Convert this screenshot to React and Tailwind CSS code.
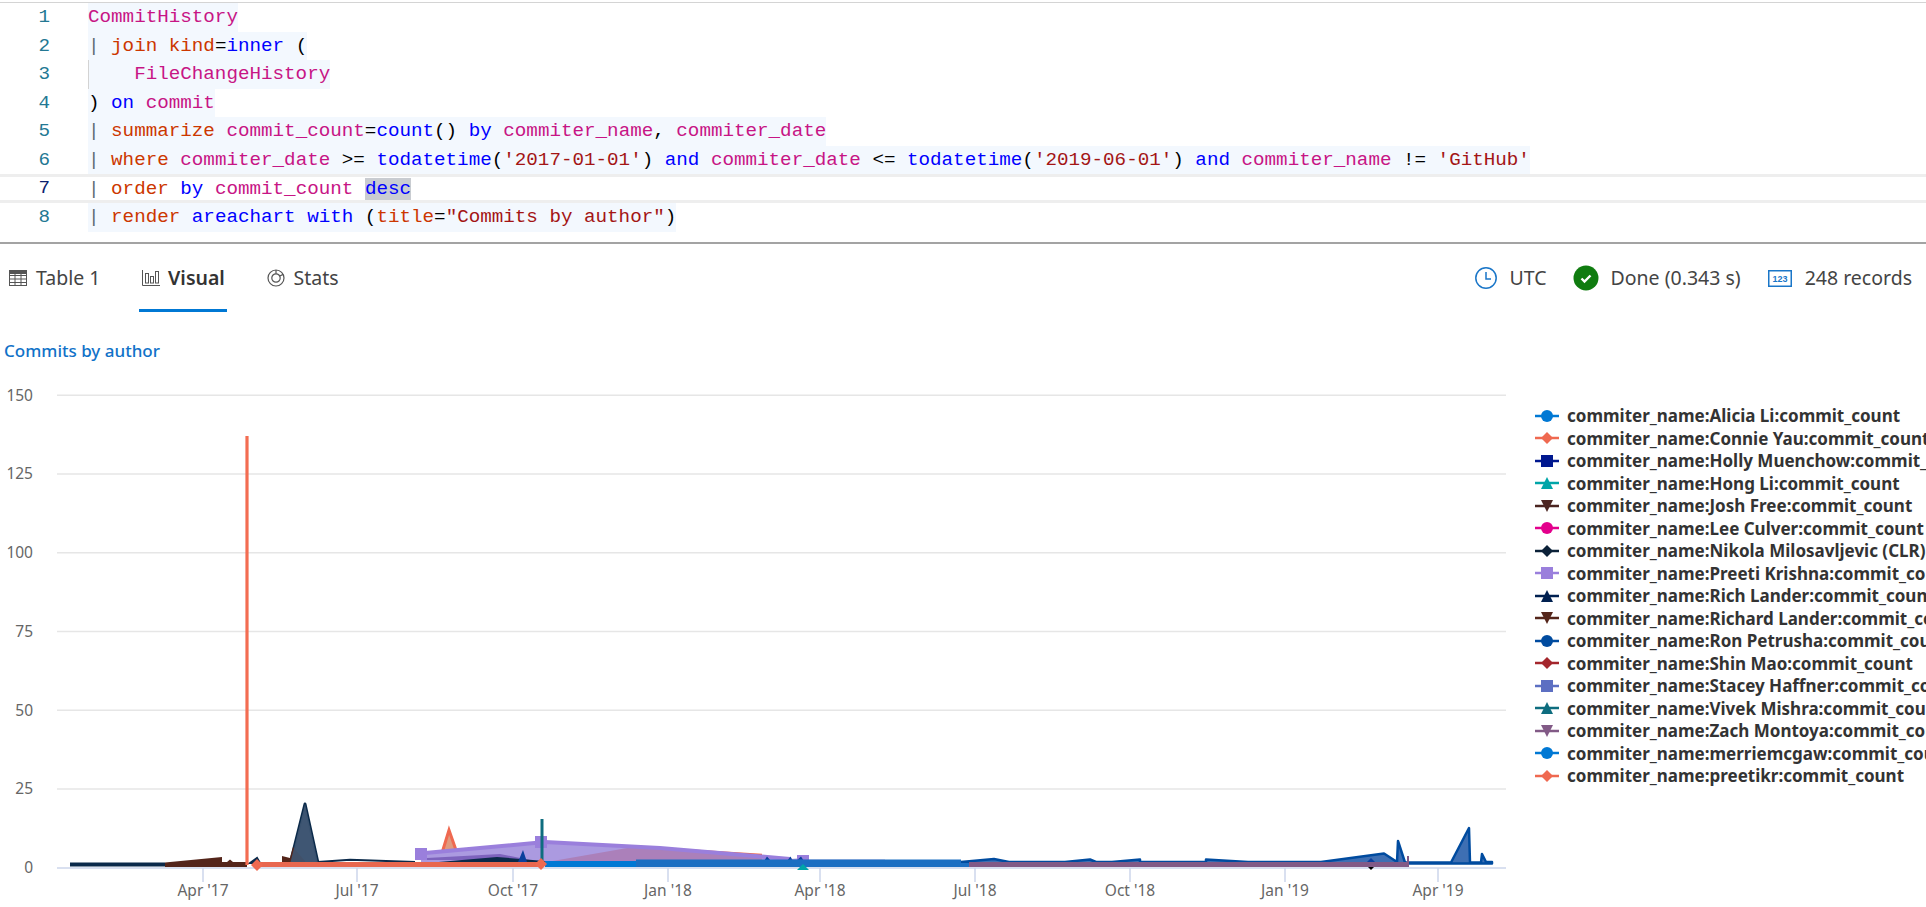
const M = "text-[#c71585]"; // table / column names
const O = "text-[#cc3700]"; // operators
const B = "text-[#0000ff]"; // functions and keywords
const S = "text-[#a31515]"; // strings
const K = "text-[#000000]"; // punctuation
const P = "text-[#5f6a75]"; // leading pipe

const lines = [
  [[M, "CommitHistory"]],
  [[P, "| "], [O, "join"], [K, " "], [O, "kind"], [K, "="], [B, "inner"], [K, " ("]],
  [[K, "    "], [M, "FileChangeHistory"]],
  [[K, ") "], [B, "on"], [K, " "], [M, "commit"]],
  [[P, "| "], [O, "summarize"], [K, " "], [M, "commit_count"], [K, "="], [B, "count"], [K, "() "], [B, "by"], [K, " "], [M, "commiter_name"], [K, ", "], [M, "commiter_date"]],
  [[P, "| "], [O, "where"], [K, " "], [M, "commiter_date"], [K, " >= "], [B, "todatetime"], [K, "("], [S, "'2017-01-01'"], [K, ") "], [B, "and"], [K, " "], [M, "commiter_date"], [K, " <= "], [B, "todatetime"], [K, "("], [S, "'2019-06-01'"], [K, ") "], [B, "and"], [K, " "], [M, "commiter_name"], [K, " != "], [S, "'GitHub'"]],
  [[P, "| "], [O, "order"], [K, " "], [B, "by"], [K, " "], [M, "commit_count"], [K, " "], ["sel", "desc"]],
  [[P, "| "], [O, "render"], [K, " "], [B, "areachart"], [K, " "], [B, "with"], [K, " ("], [O, "title"], [K, "="], [S, "\"Commits by author\""], [K, ")"]],
];

const legend = [
  ["Alicia Li", "#0078d4", "circle"],
  ["Connie Yau", "#ef6950", "diamond"],
  ["Holly Muenchow", "#00188f", "square"],
  ["Hong Li", "#00a5a8", "up"],
  ["Josh Free", "#4b2420", "down"],
  ["Lee Culver", "#e3008c", "circle"],
  ["Nikola Milosavljevic (CLR)", "#0b2138", "diamond"],
  ["Preeti Krishna", "#9a7fdc", "square"],
  ["Rich Lander", "#002050", "up"],
  ["Richard Lander", "#54251a", "down"],
  ["Ron Petrusha", "#004b9f", "circle"],
  ["Shin Mao", "#a4262c", "diamond"],
  ["Stacey Haffner", "#5c6fc2", "square"],
  ["Vivek Mishra", "#0e6d7f", "up"],
  ["Zach Montoya", "#825a86", "down"],
  ["merriemcgaw", "#0078d4", "circle"],
  ["preetikr", "#ef6950", "diamond"],
];

const yTicks = [150, 125, 100, 75, 50, 25, 0];
const xTicks = [
  [203, "Apr '17"], [357, "Jul '17"], [513, "Oct '17"], [668, "Jan '18"], [820, "Apr '18"],
  [975, "Jul '18"], [1130, "Oct '18"], [1285, "Jan '19"], [1438, "Apr '19"],
];

function Marker({ kind, color, x = 12, y = 10, s = 6 }) {
  if (kind === "circle") return <circle cx={x} cy={y} r={s} fill={color} />;
  if (kind === "square") return <rect x={x - s} y={y - s} width={s * 2} height={s * 2} fill={color} />;
  if (kind === "diamond") return <path d={`M${x} ${y - s}L${x + s} ${y}L${x} ${y + s}L${x - s} ${y}Z`} fill={color} />;
  if (kind === "up") return <path d={`M${x} ${y - s}L${x + s} ${y + s}L${x - s} ${y + s}Z`} fill={color} />;
  return <path d={`M${x - s} ${y - s}L${x + s} ${y - s}L${x} ${y + s}Z`} fill={color} />;
}

function Chart() {
  return (
    <svg width="1530" height="532" viewBox="0 375 1530 532" className="shrink-0">
      {/* grid */}
      {yTicks.map((t) => {
        const y = 866.7 - t * 3.15;
        return (
          <g key={t}>
            {t > 0 && <line x1="57" x2="1506" y1={y} y2={y} stroke="#e6e6e6" strokeWidth="1.5" />}
            <text x="33" y={y + 5.5} textAnchor="end" fontSize="15.5" fill="#666666" fontFamily="'Noto Sans', sans-serif">{t}</text>
          </g>
        );
      })}
      <line x1="57" x2="1506" y1="867" y2="867" stroke="#ccd6eb" strokeWidth="1.5" />
      {xTicks.map(([x, label]) => (
        <g key={label}>
          <line x1={x} x2={x} y1="867" y2="881" stroke="#ccd6eb" strokeWidth="1.5" />
          <text x={x} y="895" textAnchor="middle" fontSize="15.5" fill="#666666" fontFamily="'Noto Sans', sans-serif">{label}</text>
        </g>
      ))}

      {/* Rich Lander / Nikola */}
      <path d="M70 863.5H165" stroke="#0b2a4a" strokeWidth="4" fill="none" />
      <path d="M290 863L305 803L318 862Z" fill="#3f5773" stroke="#0b2a4a" strokeWidth="3" strokeLinejoin="round" />
      <path d="M318 861L350 858.7L415 861" stroke="#0b2a4a" strokeWidth="2" fill="none" />
      <path d="M250 862L257 857L260 862Z" fill="#0b2a4a" stroke="#0b2a4a" strokeWidth="2" />

      {/* Josh Free / Richard Lander */}
      <path d="M165 861.5L222 856V861H227L230 858.5L233 861H247V866H165Z" fill="#54251a" />
      <path d="M282 866V855L290 857L293 846L305 860V866Z" fill="#54251a" />
      <path d="M290 863L305 803L318 862Z" fill="#3f5773" fillOpacity="0.9" />

      {/* Connie Yau */}
      <path d="M442 852L449 829L457 852Z" fill="#e09a7e" stroke="#ef6950" strokeWidth="3" />
      <path d="M547 861L633 846L762 854L762 861Z" fill="#b07fbd" />
      <path d="M633 846L762 854" stroke="#ef6950" strokeWidth="2.5" fill="none" />

      {/* Preeti Krishna */}
      <path d="M421 853L545 841L790 858L803 857V862H421Z" fill="#ab9ae0" />
      <path d="M547 861L633 846L725 851L762 855V860H547Z" fill="#ab80ba" />
      <path d="M425 852L545 841L660 847L790 858" stroke="#9a7fdc" strokeWidth="4" fill="none" />
      <path d="M427 857L500 853L530 859H427Z" fill="#7d63bd" />
      <path d="M427 862L497 856L545 860V863H427Z" fill="#0b2a4a" />
      <rect x="415" y="847" width="12" height="12" fill="#9a7fdc" />
      <rect x="535" y="835" width="12" height="12" fill="#9a7fdc" />
      <rect x="797" y="854" width="12" height="6" fill="#9a7fdc" />

      {/* small blue peaks */}
      <path d="M518 861L523 849L527 861Z" fill="#0a3f9c" />
      <path d="M764 860L767 855.5L771 860Z M787 860L790.5 855.5L793 860Z M796 860L801 855.5L804 860Z" fill="#0a3f9c" />
      <path d="M790 859.5H885" stroke="#7a5fc0" strokeWidth="1.5" fill="none" />

      {/* Connie Yau flat run and spike */}
      <path d="M257 863.5H541" stroke="#e8674f" strokeWidth="5" fill="none" />
      <path d="M247 864V435" stroke="#f36d52" strokeWidth="3.2" fill="none" />
      <path d="M257 858L263 864L257 870L251 864Z" fill="#ef6950" />

      {/* Ron Petrusha */}
      <path d="M961 861L994 858L1009 861H1065L1090 858.5L1096 861H1112L1140 858.5V861H1206V858.5L1248 861H1321L1384 852.5L1397 861L1398 840L1405 861.5H1451L1469 827L1470 861.5H1481L1482 853L1486 861H1492V862.5H961Z" fill="#3e6fb3" stroke="#004b9f" strokeWidth="2.5" strokeLinejoin="round" />

      {/* merriemcgaw */}
      <path d="M545 863H636" stroke="#0078d4" strokeWidth="6" fill="none" />
      <path d="M636 862.2H961" stroke="#1b6ec2" strokeWidth="7.5" fill="none" />
      <path d="M961 864H969" stroke="#1b6ec2" strokeWidth="4" fill="none" />

      {/* Hong Li, Vivek Mishra */}
      <path d="M803 863L809 869H797Z" fill="#00a5a8" />
      <path d="M542 863V818" stroke="#0e6d7f" strokeWidth="3" fill="none" />
      <path d="M541 857L547 863L541 869L535 863Z" fill="#ef6950" />

      {/* Zach Montoya */}
      <path d="M969 863.5H1409" stroke="#825a86" strokeWidth="5" fill="none" />
      <path d="M1408 862V855" stroke="#825a86" strokeWidth="2" fill="none" />
      <path d="M1367 861L1371 857L1375 861Z" fill="#0a3f9c" />
      <path d="M1368 866H1374L1371 869Z" fill="#000000" />
    </svg>
  );
}

function StatusIcon({ children }) {
  return <svg width="24" height="24" viewBox="0 0 24 24" className="shrink-0">{children}</svg>;
}

export default function App() {
  return (
    <div className="w-[1926px] h-[907px] overflow-hidden bg-white font-['Noto_Sans',sans-serif]">
      {/* query editor */}
      <div className="mt-[2px] h-[241.5px] border-t-[1.5px] border-b-2 border-t-[#d4d4d4] border-b-[#a3a3a3] font-['Liberation_Mono',monospace] text-[19.23px] whitespace-pre">
        {lines.map((tokens, i) => {
          const current = i === 6;
          return (
            <div key={i} className={current ? "flex h-[28.57px] items-center border-y-[3px] border-y-[#eeeeee]" : "flex h-[28.57px] items-stretch"}>
              <div className={current ? "w-[88px] shrink-0 pr-[38px] text-right text-[#0b216f]" : "w-[88px] shrink-0 pr-[38px] text-right text-[#237893] leading-[28.57px]"}>{i + 1}</div>
              <div className={current ? "leading-[22px]" : i === 2 ? "bg-[#f3f8fe] leading-[28.57px] shadow-[inset_1px_0_0_#d3d3d3]" : "bg-[#f3f8fe] leading-[28.57px]"}>
                {tokens.map(([cls, text], j) =>
                  cls === "sel" ? (
                    <span key={j} className="bg-[#c9ccd1] text-[#0000ff]">{text}</span>
                  ) : (
                    <span key={j} className={cls}>{text}</span>
                  )
                )}
              </div>
            </div>
          );
        })}
      </div>

      {/* tabs */}
      <div className="flex h-[68px] items-start justify-between text-[19.5px] text-[#444444]">
        <div className="flex h-full">
          <div className="ml-[9px] flex h-full items-center gap-[9px] pt-[1px]">
            <svg width="18" height="16" viewBox="0 0 18 16" fill="none" stroke="#555555" strokeWidth="1">
              <rect x="0.5" y="0.5" width="17" height="15" />
              <path d="M0.5 5.5H17.5M0.5 9H17.5M0.5 12.5H17.5M6 4V15.5M12 4V15.5" />
              <path d="M0.5 2.5H17.5" strokeWidth="3" />
            </svg>
            <span>Table 1</span>
          </div>
          <div className="ml-[39px] flex h-full w-[88px] items-center justify-center gap-[8px] border-b-[3px] border-b-[#0078d4] pt-[4px] font-semibold text-[#333333]">
            <svg width="18" height="16" viewBox="0 0 18 16" fill="none" stroke="#555555" strokeWidth="1">
              <path d="M0.5 0V15.5H18" />
              <rect x="3.5" y="3.5" width="3" height="9.5" />
              <rect x="8.5" y="6.5" width="3" height="6.5" />
              <rect x="13.5" y="1.5" width="3" height="11.5" />
            </svg>
            <span>Visual</span>
          </div>
          <div className="ml-[40px] flex h-full items-center gap-[8px] pt-[1px]">
            <svg width="18" height="18" viewBox="0 0 18 18" fill="none" stroke="#555555" strokeWidth="1.2">
              <circle cx="9" cy="9" r="8" />
              <circle cx="9" cy="9" r="4.2" />
              <path d="M9 1V4.8M12.6 7L16.3 5.4" />
            </svg>
            <span>Stats</span>
          </div>
        </div>
        <div className="mr-[14px] flex h-[68px] items-center pt-[1px] text-[19.5px]">
          <StatusIcon>
            <circle cx="12" cy="12" r="10.2" fill="none" stroke="#1a76c8" strokeWidth="1.5" />
            <path d="M12 6V13H17" fill="none" stroke="#1a76c8" strokeWidth="1.5" />
          </StatusIcon>
          <span className="ml-[12px]">UTC</span>
          <svg width="26" height="26" viewBox="0 0 26 26" className="ml-[26px] shrink-0">
            <circle cx="13" cy="13" r="12.5" fill="#107c10" />
            <path d="M8.5 13.5L11.5 16.5L17.5 10.5" fill="none" stroke="#ffffff" strokeWidth="2.4" />
          </svg>
          <span className="ml-[12px]">Done (0.343 s)</span>
          <svg width="24" height="17" viewBox="0 0 24 17" className="ml-[27px] shrink-0">
            <rect x="0.75" y="0.75" width="22.5" height="15.5" fill="none" stroke="#1a76c8" strokeWidth="1.5" />
            <text x="12" y="12" textAnchor="middle" fontSize="9" fontWeight="700" fill="#1a76c8" fontFamily="'Liberation Sans', sans-serif">123</text>
          </svg>
          <span className="ml-[13px]">248 records</span>
        </div>
      </div>

      {/* chart title */}
      <div className="h-[64px] pl-[4px] pt-[27px] text-[17px] font-medium leading-[24px] text-[#1172c8]">Commits by author</div>

      {/* chart and legend */}
      <div className="flex">
        <Chart />
        <div className="flex flex-col pl-[5px] pt-[29px]">
          {legend.map(([name, color, kind]) => (
            <div key={name} className="flex h-[22.5px] items-center whitespace-nowrap text-[17px] font-bold text-[#333333]">
              <svg width="24" height="20" viewBox="0 0 24 20" className="mr-[8px] shrink-0">
                <line x1="0" x2="24" y1="10" y2="10" stroke={color} strokeWidth="2.5" />
                <Marker kind={kind} color={color} />
              </svg>
              <span>commiter_name:{name}:commit_count</span>
            </div>
          ))}
        </div>
      </div>
    </div>
  );
}
